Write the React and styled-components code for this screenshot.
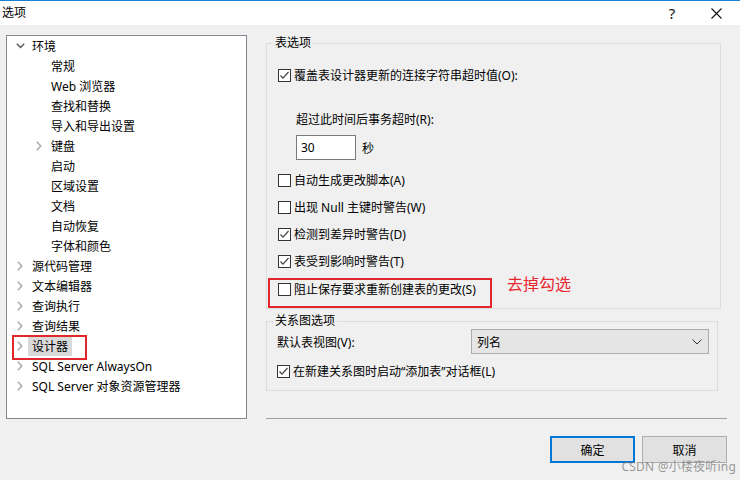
import React from "react";
import styled, { createGlobalStyle } from "styled-components";

const GlobalStyle = createGlobalStyle`
  html, body {
    margin: 0;
    padding: 0;
    background: #f0f0f0;
  }
  body {
    font-family: "Noto Sans", "Noto Sans CJK SC", sans-serif;
    font-size: 12px;
    color: #000;
  }
`;

const Window = styled.div`
  position: relative;
  width: 740px;
  height: 480px;
  overflow: hidden;
  background: #f0f0f0;
  display: flex;
  flex-direction: column;
`;

const TitleBar = styled.div`
  height: 24px;
  border-top: 1px solid #1883d7;
  background: #fff;
  display: flex;
  align-items: center;
  padding-left: 2px;
`;

const TitleText = styled.span`
  line-height: 20px;
`;

const TitleButtons = styled.div`
  margin-left: auto;
  margin-right: 2px;
  display: flex;
  height: 100%;
`;

const TitleButton = styled.div`
  width: 44px;
  display: flex;
  align-items: center;
  justify-content: center;
  font-size: 15px;
  color: #111;
`;

const Main = styled.div`
  display: flex;
  gap: 19px;
  padding: 10px 13px 0 6px;
`;

const Tree = styled.div`
  width: 241px;
  height: 384px;
  box-sizing: border-box;
  border: 1px solid #828790;
  background: #fff;
  display: flex;
  flex-direction: column;
`;

const TreeRow = styled.div`
  position: relative;
  height: 20px;
  display: flex;
  align-items: center;
  padding-left: ${(p) => 7 + p.$level * 19}px;

  &::after {
    content: "";
    display: ${(p) => (p.$marked ? "block" : "none")};
    position: absolute;
    left: 5px;
    top: -1px;
    width: 75px;
    height: 25px;
    box-sizing: border-box;
    border: 2px solid #e3262b;
  }
`;

const ChevronBox = styled.span`
  width: 12px;
  height: 20px;
  margin-right: 2px;
  display: flex;
  align-items: center;
  justify-content: center;
`;

const TreeLabel = styled.span`
  padding: 0 4px;
  line-height: 19px;
  white-space: nowrap;
  background: ${(p) => (p.$selected ? "#d9d9d9" : "transparent")};
`;

const RightCol = styled.div`
  width: 461px;
  display: flex;
  flex-direction: column;
`;

const Group = styled.fieldset`
  margin: ${(p) => p.$top || 0}px ${(p) => p.$right}px 0 0;
  padding: 0;
  min-width: 0;
  border: 1px solid #dcdcdc;
`;

const Legend = styled.legend`
  margin-left: 6px;
  padding: 0 2px;
  line-height: 16px;
`;

const GroupBody = styled.div`
  display: flex;
  flex-direction: column;
  padding: ${(p) => p.$pad};
`;

const CheckRow = styled.label`
  height: ${(p) => p.$h || 20}px;
  display: flex;
  align-items: center;
  gap: 3px;
  white-space: nowrap;
`;

const Box = styled.span`
  width: 13px;
  height: 13px;
  box-sizing: border-box;
  border: 1px solid #333;
  background: #fff;
  display: flex;
  align-items: center;
  justify-content: center;
`;

const SubLabel = styled.div`
  margin: 25px 0 0 18px;
  line-height: 20px;
`;

const TimeoutRow = styled.div`
  margin: 5px 0 0 18px;
  display: flex;
  align-items: center;
  gap: 6px;
`;

const TextBox = styled.div`
  width: 60px;
  height: 25px;
  box-sizing: border-box;
  border: 1px solid #7a7a7a;
  background: #fff;
  padding-left: 4px;
  line-height: 23px;
`;

const CheckList = styled.div`
  margin-top: 10px;
  display: flex;
  flex-direction: column;
  gap: 7px;
`;

const NoteRow = styled.div`
  display: flex;
  align-items: flex-start;
`;

const Marked = styled.div`
  width: 224px;
  margin-left: -10px;
  box-sizing: border-box;
  border: 2px solid #e3262b;
  padding: 0 8px 8px 8px;
`;

const Note = styled.span`
  margin: -4px 0 0 15px;
  font-size: 16px;
  line-height: 20px;
  color: #e8262f;
`;

const SelectRow = styled.div`
  height: 25px;
  display: flex;
  align-items: center;
`;

const SelectLabel = styled.span`
  width: 194px;
  flex-shrink: 0;
`;

const Select = styled.div`
  flex: 1;
  height: 25px;
  box-sizing: border-box;
  border: 1px solid #adadad;
  background: #e5e5e5;
  padding: 0 6px 0 5px;
  display: flex;
  align-items: center;
  justify-content: space-between;
`;

const RowGap = styled.div`
  height: ${(p) => p.$h}px;
`;

const Separator = styled.div`
  margin-top: 27px;
  height: 1px;
  background: #a0a0a0;
`;

const Buttons = styled.div`
  margin-top: 17px;
  display: flex;
  justify-content: flex-end;
  gap: 7px;
`;

const Button = styled.div`
  width: 85px;
  height: 27px;
  box-sizing: border-box;
  border: ${(p) => (p.$primary ? "2px solid #0078d7" : "1px solid #adadad")};
  background: #e1e1e1;
  display: flex;
  align-items: center;
  justify-content: center;
`;

const Watermark = styled.div`
  position: absolute;
  right: 4px;
  bottom: 6px;
  font-size: 12px;
  line-height: 14px;
  color: rgba(120, 120, 120, 0.75);
  letter-spacing: 0.2px;
`;

const treeItems = [
  { label: "环境", level: 0, chevron: "open" },
  { label: "常规", level: 1 },
  { label: "Web 浏览器", level: 1 },
  { label: "查找和替换", level: 1 },
  { label: "导入和导出设置", level: 1 },
  { label: "键盘", level: 1, chevron: "closed" },
  { label: "启动", level: 1 },
  { label: "区域设置", level: 1 },
  { label: "文档", level: 1 },
  { label: "自动恢复", level: 1 },
  { label: "字体和颜色", level: 1 },
  { label: "源代码管理", level: 0, chevron: "closed" },
  { label: "文本编辑器", level: 0, chevron: "closed" },
  { label: "查询执行", level: 0, chevron: "closed" },
  { label: "查询结果", level: 0, chevron: "closed" },
  { label: "设计器", level: 0, chevron: "closed", selected: true, marked: true },
  { label: "SQL Server AlwaysOn", level: 0, chevron: "closed" },
  { label: "SQL Server 对象资源管理器", level: 0, chevron: "closed" },
];

function Chevron({ kind }) {
  if (kind === "open") {
    return (
      <svg width="9" height="6" viewBox="0 0 9 6">
        <polyline points="0.8,0.8 4.5,4.5 8.2,0.8" fill="none" stroke="#555" strokeWidth="1.4" />
      </svg>
    );
  }
  if (kind === "closed") {
    return (
      <svg width="6" height="10" viewBox="0 0 6 10">
        <polyline points="0.8,0.8 4.8,5 0.8,9.2" fill="none" stroke="#a6a6a6" strokeWidth="1.4" />
      </svg>
    );
  }
  return null;
}

function Checkbox({ checked }) {
  return (
    <Box>
      {checked && (
        <svg width="11" height="11" viewBox="0 0 11 11">
          <polyline points="1.5,5.5 4,8.2 9.5,2" fill="none" stroke="#444" strokeWidth="1.2" />
        </svg>
      )}
    </Box>
  );
}

function Check({ checked, children, h }) {
  return (
    <CheckRow $h={h}>
      <Checkbox checked={checked} />
      <span>{children}</span>
    </CheckRow>
  );
}

export default function App() {
  return (
    <Window>
      <GlobalStyle />
      <TitleBar>
        <TitleText>选项</TitleText>
        <TitleButtons>
          <TitleButton>?</TitleButton>
          <TitleButton>
            <svg width="11" height="11" viewBox="0 0 11 11">
              <path d="M0.5 0.5 L10.5 10.5 M10.5 0.5 L0.5 10.5" stroke="#111" strokeWidth="1.1" />
            </svg>
          </TitleButton>
        </TitleButtons>
      </TitleBar>

      <Main>
        <Tree>
          {treeItems.map((item) => (
            <TreeRow key={item.label} $level={item.level} $marked={item.marked}>
              <ChevronBox>
                <Chevron kind={item.chevron} />
              </ChevronBox>
              <TreeLabel $selected={item.selected}>{item.label}</TreeLabel>
            </TreeRow>
          ))}
        </Tree>

        <RightCol>
          <Group $right={6}>
            <Legend>表选项</Legend>
            <GroupBody $pad="14px 0 0 11px">
              <Check checked>覆盖表设计器更新的连接字符串超时值(O):</Check>
              <SubLabel>超过此时间后事务超时(R):</SubLabel>
              <TimeoutRow>
                <TextBox>30</TextBox>
                <span>秒</span>
              </TimeoutRow>
              <CheckList>
                <Check>自动生成更改脚本(A)</Check>
                <Check>出现 Null 主键时警告(W)</Check>
                <Check checked>检测到差异时警告(D)</Check>
                <Check checked>表受到影响时警告(T)</Check>
                <NoteRow>
                  <Marked>
                    <Check h={18}>阻止保存要求重新创建表的更改(S)</Check>
                  </Marked>
                  <Note>去掉勾选</Note>
                </NoteRow>
              </CheckList>
            </GroupBody>
          </Group>

          <Group $right={9} $top={4}>
            <Legend>关系图选项</Legend>
            <GroupBody $pad="0 8px 9px 10px">
              <SelectRow>
                <SelectLabel>默认表视图(V):</SelectLabel>
                <Select>
                  <span>列名</span>
                  <svg width="10" height="6" viewBox="0 0 10 6">
                    <polyline points="0.5,0.5 5,5 9.5,0.5" fill="none" stroke="#333" strokeWidth="1" />
                  </svg>
                </Select>
              </SelectRow>
              <RowGap $h={7} />
              <Check checked>在新建关系图时启动“添加表”对话框(L)</Check>
            </GroupBody>
          </Group>

          <Separator />
          <Buttons>
            <Button $primary>确定</Button>
            <Button>取消</Button>
          </Buttons>
        </RightCol>
      </Main>
      <Watermark>CSDN @小楼夜听ing</Watermark>
    </Window>
  );
}
